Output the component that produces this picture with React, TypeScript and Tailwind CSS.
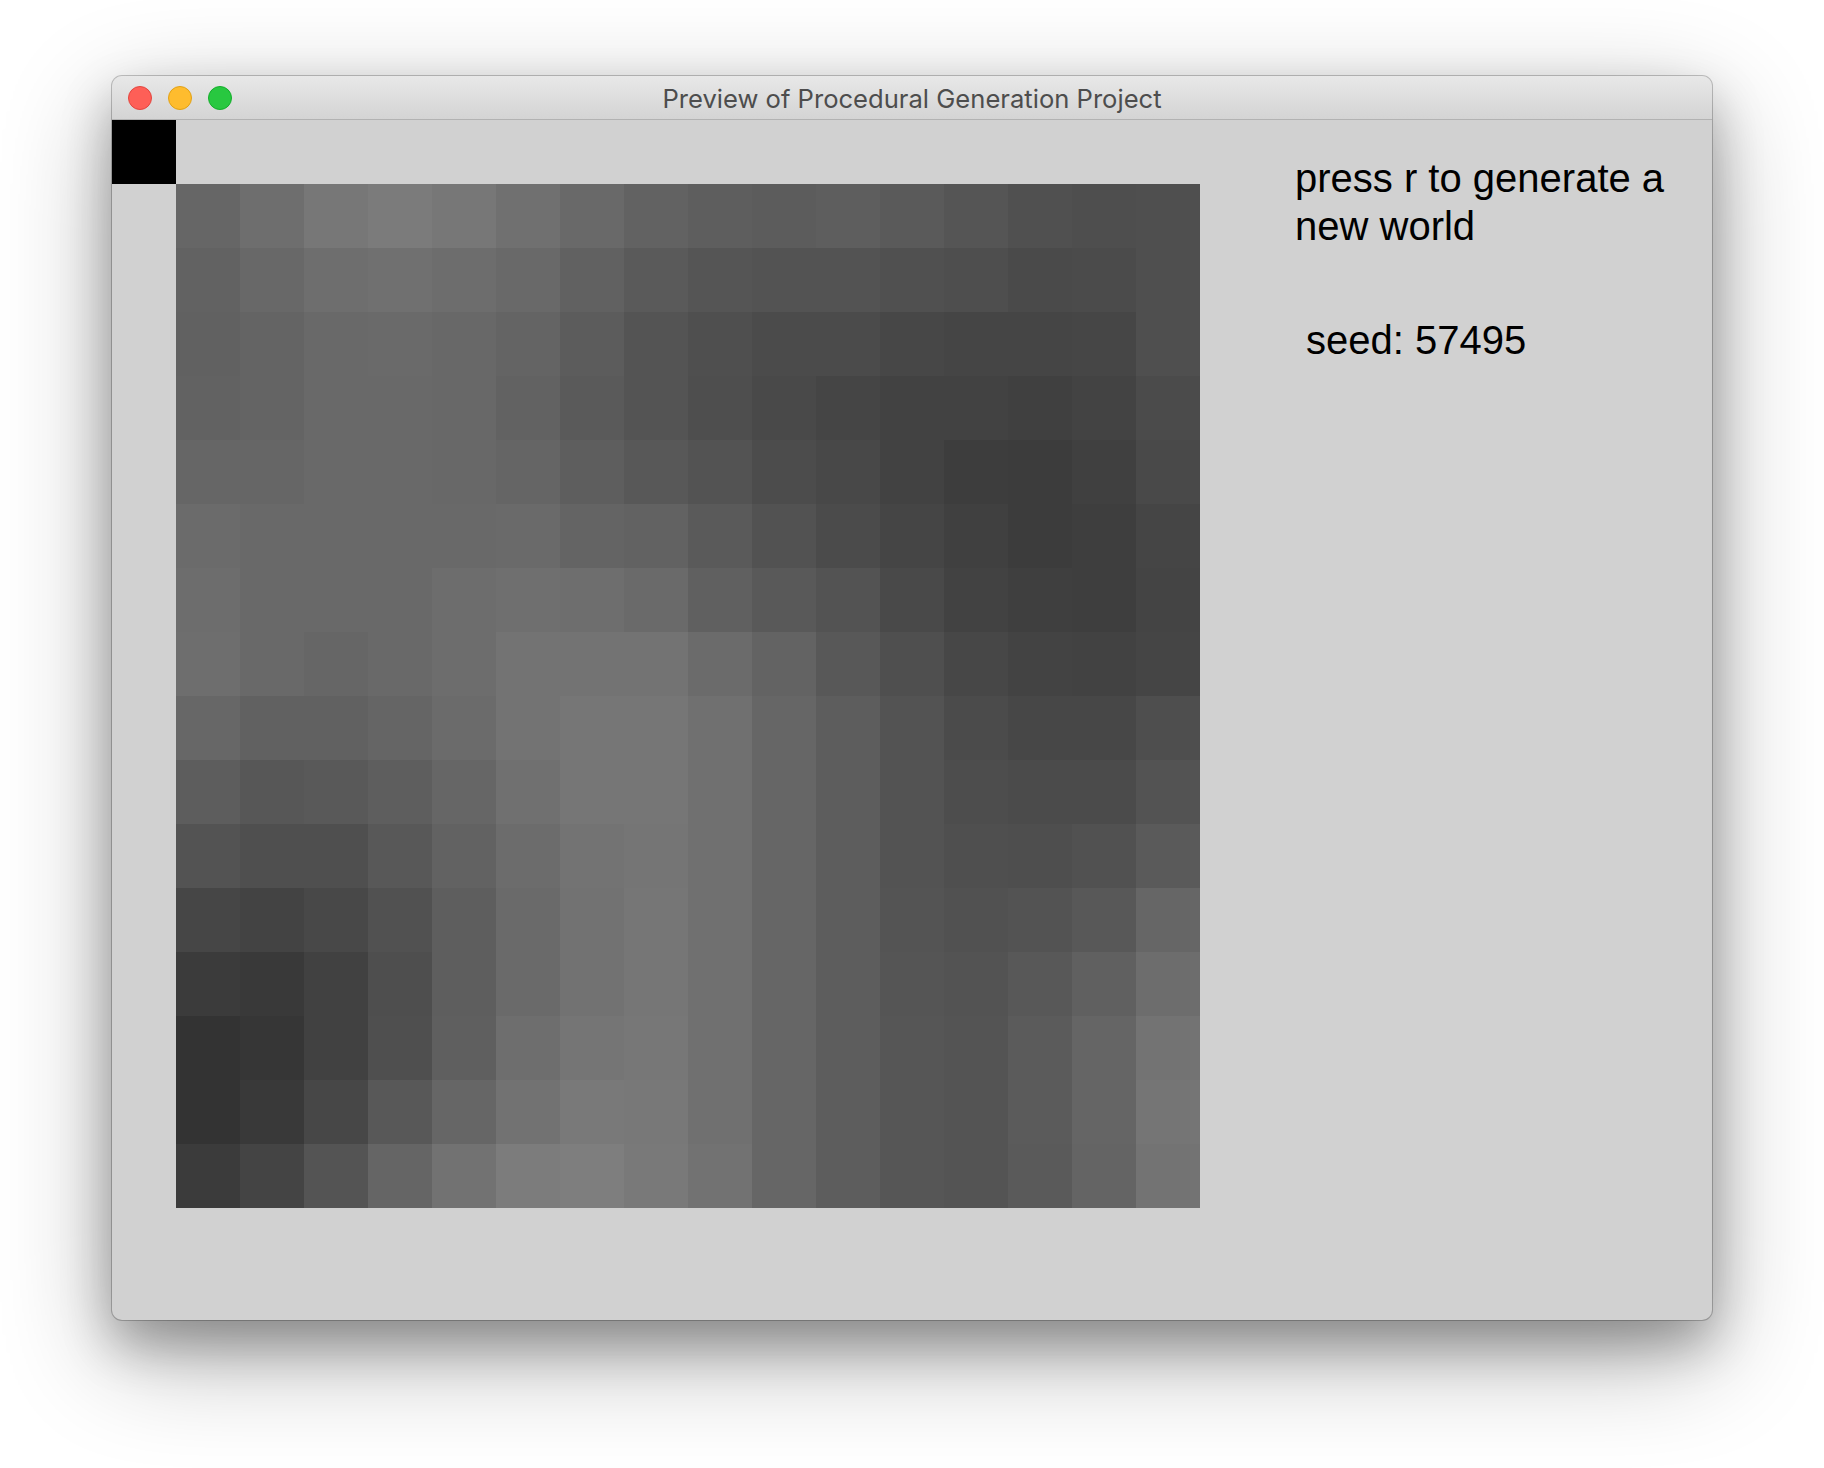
import React from "react";

const ROWS: string[][] = [
  ["66", "6e", "77", "7b", "77", "70", "69", "62", "5e", "5c", "5e", "5a", "55", "50", "4e", "4f"],
  ["62", "68", "6e", "70", "6d", "69", "61", "5a", "55", "53", "53", "50", "4e", "4a", "4b", "4f"],
  ["61", "64", "69", "6a", "68", "64", "5c", "54", "4f", "4b", "4b", "47", "45", "45", "46", "4f"],
  ["62", "64", "69", "69", "68", "62", "5a", "54", "4e", "49", "45", "42", "42", "40", "43", "4b"],
  ["66", "66", "69", "69", "68", "65", "5e", "58", "53", "4c", "48", "42", "3d", "3c", "40", "49"],
  ["6b", "69", "69", "69", "69", "6a", "64", "62", "5a", "52", "4b", "45", "40", "3c", "3e", "45"],
  ["6d", "69", "69", "69", "6d", "6f", "6e", "6a", "60", "59", "53", "49", "42", "3f", "3e", "44"],
  ["6e", "69", "66", "69", "6d", "73", "73", "73", "6b", "63", "58", "4f", "47", "43", "42", "45"],
  ["67", "61", "61", "65", "6b", "73", "76", "76", "70", "66", "5d", "53", "4b", "47", "47", "4e"],
  ["5d", "57", "59", "5e", "66", "70", "76", "76", "70", "66", "5d", "53", "4d", "4b", "4b", "53"],
  ["53", "4f", "4f", "58", "62", "6c", "73", "75", "70", "66", "5d", "53", "4f", "4e", "51", "5a"],
  ["46", "43", "48", "51", "5e", "6a", "72", "76", "70", "66", "5d", "54", "51", "53", "58", "66"],
  ["3b", "39", "41", "4e", "5e", "6a", "72", "76", "70", "66", "5d", "55", "53", "58", "60", "6d"],
  ["33", "36", "41", "4f", "5f", "6e", "75", "77", "70", "66", "5d", "56", "54", "5b", "65", "73"],
  ["33", "39", "47", "58", "66", "72", "79", "78", "70", "66", "5d", "56", "54", "5b", "65", "75"],
  ["3b", "44", "54", "65", "72", "7c", "7e", "79", "72", "66", "5d", "56", "54", "5a", "64", "73"],
];

export default function App() {
  return (
    <div className="w-full h-[1468px] bg-white pt-[76px] pl-[112px] overflow-hidden">
      <div className="w-[1600px] h-[1244px] rounded-[10px] overflow-hidden bg-[#d1d1d1] shadow-[0_0_0_1px_rgba(0,0,0,0.22),0_24px_50px_rgba(0,0,0,0.28),0_34px_110px_rgba(0,0,0,0.32)] flex flex-col">
        <div className="relative h-[44px] shrink-0 bg-gradient-to-b from-[#e8e8e8] to-[#d4d4d4] border-b border-[#b2b2b2] flex items-center justify-center">
          <div className="absolute left-[16px] top-[10px] flex gap-[16px]">
            <span className="w-[24px] h-[24px] rounded-full bg-[#fe5f57] border border-[#e2463f]" />
            <span className="w-[24px] h-[24px] rounded-full bg-[#febc2e] border border-[#e1a116]" />
            <span className="w-[24px] h-[24px] rounded-full bg-[#28c840] border border-[#14ae2b]" />
          </div>
          <span
            className="text-[25.6px] text-[#4d4d4d] pt-[4px]"
            style={{ fontFamily: "Inter, 'Noto Sans', sans-serif" }}
          >
            Preview of Procedural Generation Project
          </span>
        </div>
        <div className="flex flex-1">
          <div className="w-16 h-16 bg-black shrink-0" />
          <div className="mt-16 w-[1024px] h-[1024px] shrink-0 grid grid-cols-16 grid-rows-16">
            {ROWS.flatMap((row, r) =>
              row.map((v, c) => (
                <div key={`${r}-${c}`} style={{ backgroundColor: `#${v}${v}${v}` }} />
              ))
            )}
          </div>
          <div
            className="ml-[95px] mt-[34px] w-[400px] text-[40px] leading-[48px] text-black"
            style={{ fontFamily: "'Liberation Sans', Arial, sans-serif" }}
          >
            <p>press r to generate a new world</p>
            <p className="mt-[66px] whitespace-pre"> seed: 57495</p>
          </div>
        </div>
      </div>
    </div>
  );
}
